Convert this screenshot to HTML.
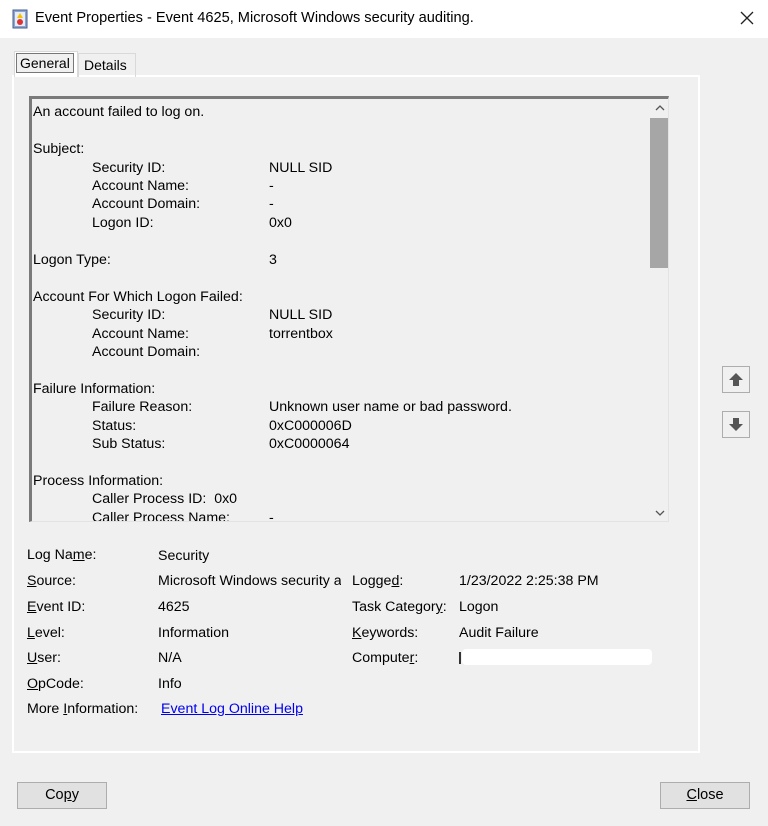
<!DOCTYPE html>
<html><head><style>
body{margin:0;width:768px;height:826px;background:#f0f0f0;font-family:"Liberation Sans",sans-serif;font-size:14.2px;color:#000;position:relative;overflow:hidden}
.a{position:absolute;white-space:nowrap}
.tb{position:absolute;left:0;top:0;width:768px;height:38px;background:#fff}
.bx{position:absolute;left:29px;top:96px;width:640px;height:426px;border-top:3px solid #7a7a7a;border-left:3px solid #7a7a7a;border-right:1px solid #e3e3e3;border-bottom:1px solid #e3e3e3;background:#f0f0f0;overflow:hidden;box-sizing:border-box}
.ln{position:absolute;white-space:nowrap}
u{text-decoration:underline}
.btn{position:absolute;width:90px;height:27px;background:#e1e1e1;border:1px solid #adadad;box-sizing:border-box;text-align:center;line-height:25px;font-size:14.5px}
.ab{position:absolute;left:722px;width:28px;height:27px;border:1px solid #adadad;background:#f0f0f0;box-sizing:border-box}
</style></head><body>
<div class="tb"></div>
<svg class="a" style="left:11px;top:9px" width="18" height="20" viewBox="0 0 18 20"><rect x="2" y="1" width="14" height="18" fill="#8aa6d6" stroke="#4a5f8a"/><rect x="4" y="3" width="10" height="14" fill="#e8ecf5"/><path d="M9 4 L12 9 H6Z" fill="#f2c200"/><circle cx="9" cy="13" r="3" fill="#d33"/></svg>
<div class="a" style="left:35px;top:10px;font-size:14.6px">Event Properties - Event 4625, Microsoft Windows security auditing.</div>
<svg class="a" style="left:740px;top:11px" width="14" height="14"><path d="M1 1L13 13M13 1L1 13" stroke="#222" stroke-width="1.3"/></svg>
<div class="a" style="left:12px;top:75px;width:688px;height:678px;border:2px solid #fff;box-sizing:border-box"></div>
<div class="a" style="left:14px;top:51px;width:62px;height:25px;border:1px solid #d9d9d9;border-bottom:none;background:#fff"></div>
<div class="a" style="left:16px;top:53px;width:58px;height:20px;border:1px solid #777;background:#f0f0f0;box-sizing:border-box"></div>
<div class="a" style="left:20px;top:55px;font-size:14px">General</div>
<div class="a" style="left:78px;top:53px;width:56px;height:23px;border:1px solid #d9d9d9;border-bottom:none"></div>
<div class="a" style="left:84px;top:57px;font-size:14px">Details</div>
<div class="bx">
<div class="ln" style="left:1px;top:5px">An account failed to log on.</div>
<div class="ln" style="left:1px;top:42px">Subject:</div>
<div class="ln" style="left:60px;top:61px">Security ID:</div><div class="ln" style="left:237px;top:61px">NULL SID</div>
<div class="ln" style="left:60px;top:79px">Account Name:</div><div class="ln" style="left:237px;top:79px">-</div>
<div class="ln" style="left:60px;top:97px">Account Domain:</div><div class="ln" style="left:237px;top:97px">-</div>
<div class="ln" style="left:60px;top:116px">Logon ID:</div><div class="ln" style="left:237px;top:116px">0x0</div>
<div class="ln" style="left:1px;top:153px">Logon Type:</div><div class="ln" style="left:237px;top:153px">3</div>
<div class="ln" style="left:1px;top:190px">Account For Which Logon Failed:</div>
<div class="ln" style="left:60px;top:208px">Security ID:</div><div class="ln" style="left:237px;top:208px">NULL SID</div>
<div class="ln" style="left:60px;top:227px">Account Name:</div><div class="ln" style="left:237px;top:227px">torrentbox</div>
<div class="ln" style="left:60px;top:245px">Account Domain:</div>
<div class="ln" style="left:1px;top:282px">Failure Information:</div>
<div class="ln" style="left:60px;top:300px">Failure Reason:</div><div class="ln" style="left:237px;top:300px">Unknown user name or bad password.</div>
<div class="ln" style="left:60px;top:319px">Status:</div><div class="ln" style="left:237px;top:319px">0xC000006D</div>
<div class="ln" style="left:60px;top:337px">Sub Status:</div><div class="ln" style="left:237px;top:337px">0xC0000064</div>
<div class="ln" style="left:1px;top:374px">Process Information:</div>
<div class="ln" style="left:60px;top:392px">Caller Process ID:&nbsp; 0x0</div>
<div class="ln" style="left:60px;top:411px">Caller Process Name:</div><div class="ln" style="left:237px;top:411px">-</div>
<div class="ln" style="left:618px;top:0;width:20px;height:423px;background:#f0f0f0"></div>
<div class="ln" style="left:618px;top:19px;width:19px;height:150px;background:#a6a6a6"></div>
<svg class="ln" style="left:623px;top:6px" width="10" height="6"><path d="M1 5L5 1L9 5" stroke="#555" fill="none" stroke-width="1.3"/></svg>
<svg class="ln" style="left:623px;top:411px" width="10" height="6"><path d="M1 1L5 5L9 1" stroke="#555" fill="none" stroke-width="1.3"/></svg>
</div>
<div class="ab" style="top:366px"><svg width="26" height="25"><path d="M13 6 L20 13 H16 V19 H10 V13 H6Z" fill="#555"/></svg></div>
<div class="ab" style="top:411px"><svg width="26" height="25"><path d="M13 19 L20 12 H16 V6 H10 V12 H6Z" fill="#555"/></svg></div>
<div class="a" style="left:27px;top:547px">Log Na<u>m</u>e:</div><div class="a" style="left:158px;top:548px">Security</div>
<div class="a" style="left:27px;top:573px"><u>S</u>ource:</div><div class="a" style="left:158px;top:573px;width:183px;overflow:hidden">Microsoft Windows security auditing.</div>
<div class="a" style="left:352px;top:573px">Logge<u>d</u>:</div><div class="a" style="left:459px;top:573px">1/23/2022 2:25:38 PM</div>
<div class="a" style="left:27px;top:599px"><u>E</u>vent ID:</div><div class="a" style="left:158px;top:599px">4625</div>
<div class="a" style="left:352px;top:599px">Task Categor<u>y</u>:</div><div class="a" style="left:459px;top:599px">Logon</div>
<div class="a" style="left:27px;top:625px"><u>L</u>evel:</div><div class="a" style="left:158px;top:625px">Information</div>
<div class="a" style="left:352px;top:625px"><u>K</u>eywords:</div><div class="a" style="left:459px;top:625px">Audit Failure</div>
<div class="a" style="left:27px;top:650px"><u>U</u>ser:</div><div class="a" style="left:158px;top:650px">N/A</div>
<div class="a" style="left:352px;top:650px">Compute<u>r</u>:</div><div class="a" style="left:459px;top:652px;width:2px;height:12px;background:#333"></div>
<div class="a" style="left:462px;top:649px;width:190px;height:16px;background:#fff;border-radius:4px"></div>
<div class="a" style="left:27px;top:676px"><u>O</u>pCode:</div><div class="a" style="left:158px;top:676px">Info</div>
<div class="a" style="left:27px;top:701px">More <u>I</u>nformation:</div><div class="a" style="left:161px;top:701px;color:#0000ee;text-decoration:underline">Event Log Online Help</div>
<div class="btn" style="left:17px;top:782px">Co<u>p</u>y</div>
<div class="btn" style="left:660px;top:782px"><u>C</u>lose</div>
</body></html>
